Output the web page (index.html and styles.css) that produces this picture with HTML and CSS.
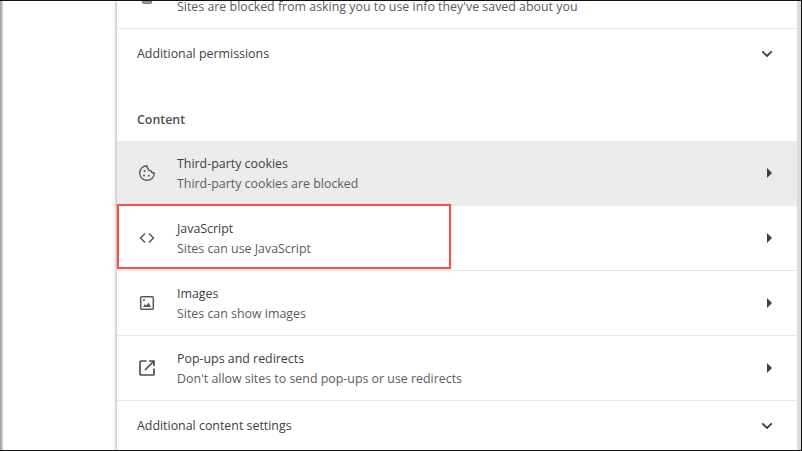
FILE: index.html
```html
<!DOCTYPE html>
<html lang="en">
<head>
    <meta charset="UTF-8">
    <meta name="viewport" content="width=device-width, initial-scale=1.0">
    <title>Site settings</title>
    <link rel="stylesheet" href="styles.css">
</head>
<body>
    <div class="frame">
        <div class="edge-left"></div>
        <div class="gutter"></div>
        <div class="card">
            <div class="row clipped">
                <svg class="icon stub" viewBox="0 0 20 3"><path d="M5.500 0h9v1.500a1 1 0 0 1-1 1h-7a1 1 0 0 1-1-1z" fill="#9a9ca0" stroke="#5f6368" stroke-width="0.800"/></svg>
                <div class="sub">Sites are blocked from asking you to use info they've saved about you</div>
            </div>
            <div class="row short">
                <div class="title grow">Additional permissions</div>
                <svg class="chevron" viewBox="0 0 12 8"><path d="M1.200 1.400 6 6l4.800-4.600" fill="none" stroke="#3c4043" stroke-width="1.800"/></svg>
            </div>
            <div class="heading">Content</div>
            <div class="row hovered">
                <svg class="icon" viewBox="0 0 20 20"><path d="M10 2.700a7.300 7.300 0 1 0 7.300 7.300c-1.900.2-3-.8-3.200-2.300-1.700.3-3-.8-3-2.500C9.800 4.900 9.600 3.800 10 2.700z" fill="none" stroke="#5a5a5a" stroke-width="1.400" stroke-linejoin="round"/><circle cx="7.600" cy="8" r="1.100" fill="#5a5a5a"/><circle cx="7" cy="12.400" r="1" fill="#5a5a5a"/><circle cx="11.800" cy="12.800" r="1" fill="#5a5a5a"/></svg>
                <div class="text grow">
                    <div class="title">Third-party cookies</div>
                    <div class="sub">Third-party cookies are blocked</div>
                </div>
                <div class="arrow"></div>
            </div>
            <div class="row marked">
                <svg class="icon" viewBox="0 0 20 20"><path d="M8 5.500 3.500 10 8 14.500M12 5.500l4.500 4.500-4.500 4.500" fill="none" stroke="#5a5a5a" stroke-width="1.500"/></svg>
                <div class="text grow">
                    <div class="title">JavaScript</div>
                    <div class="sub">Sites can use JavaScript</div>
                </div>
                <div class="arrow"></div>
            </div>
            <div class="row">
                <svg class="icon" viewBox="0 0 20 20"><rect x="3.700" y="3.700" width="12.600" height="12.600" rx="1" fill="none" stroke="#5a5a5a" stroke-width="1.500"/><circle cx="7" cy="7" r="1" fill="#5a5a5a"/><path d="M6 14l2-3 1.500 1.500L11.500 9.500 14 14z" fill="#5a5a5a"/></svg>
                <div class="text grow">
                    <div class="title">Images</div>
                    <div class="sub">Sites can show images</div>
                </div>
                <div class="arrow"></div>
            </div>
            <div class="row">
                <svg class="icon" viewBox="0 0 20 20"><path d="M9.500 3H4a1 1 0 0 0-1 1v12a1 1 0 0 0 1 1h12a1 1 0 0 0 1-1v-5.500" fill="none" stroke="#4f4f4f" stroke-width="1.700"/><path d="M12 3h5v5M17 3 8 12" fill="none" stroke="#4f4f4f" stroke-width="1.700"/></svg>
                <div class="text grow">
                    <div class="title">Pop-ups and redirects</div>
                    <div class="sub">Don't allow sites to send pop-ups or use redirects</div>
                </div>
                <div class="arrow"></div>
            </div>
            <div class="row short">
                <div class="title grow">Additional content settings</div>
                <svg class="chevron" viewBox="0 0 12 8"><path d="M1.200 1.400 6 6l4.800-4.600" fill="none" stroke="#3c4043" stroke-width="1.800"/></svg>
            </div>
        </div>
        <div class="edge-right"></div>
    </div>
</body>
</html>
```

FILE: styles.css
```css
html, body {
    margin: 0;
    height: 100%;
}

body {
    background-color: #ffffff;
    font-family: 'Open Sans', 'Noto Sans', sans-serif;
    overflow: hidden;
}

.frame {
    display: flex;
    box-sizing: border-box;
    height: 451px;
    border-top: 1px solid #111111;
    border-bottom: 1px solid #111111;
    border-right: 1px solid #111111;
    overflow: hidden;
}

.edge-left {
    width: 3px;
    background: linear-gradient(to right, #999999, #d8d8d8);
}

.gutter {
    width: 114px;
}

.edge-right {
    width: 4px;
    background-color: #dcdcdc;
}

.card {
    width: 680px;
    background-color: #ffffff;
    box-shadow: -1px 0 3px rgba(60, 64, 67, 0.4);
}

.row {
    display: flex;
    align-items: center;
    box-sizing: border-box;
    height: 65px;
    padding: 0 20px;
    border-bottom: 1px solid #e8e8e8;
    position: relative;
}

.row.clipped {
    height: 28px;
    align-items: flex-start;
}

.row.clipped .sub {
    line-height: 11px;
}

.row.short {
    height: 50px;
    padding-bottom: 1px;
    border-bottom: none;
}

.row.hovered {
    background-color: #ececec;
    border-bottom-color: #ececec;
}

.icon {
    width: 20px;
    height: 20px;
    margin-right: 20px;
    flex-shrink: 0;
}

.icon.stub {
    height: 3px;
}

.grow {
    flex: 1;
}

.text {
    display: flex;
    flex-direction: column;
    gap: 3px;
}

.title {
    font-size: 12.4px;
    line-height: 17px;
    color: #404040;
}

.sub {
    font-size: 12.4px;
    line-height: 17px;
    color: #5c5c5c;
}

.heading {
    font-size: 12.4px;
    font-weight: 600;
    line-height: 17px;
    color: #505050;
    padding: 32px 20px 13px;
}

.chevron {
    width: 12px;
    height: 8px;
    margin-right: 4px;
}

.arrow {
    width: 0;
    height: 0;
    margin-right: 5px;
    border-top: 5px solid transparent;
    border-bottom: 5px solid transparent;
    border-left: 5px solid #3c4043;
}

.marked::after {
    content: '';
    position: absolute;
    left: 0;
    top: -2px;
    width: 334px;
    height: 65px;
    box-sizing: border-box;
    border: 2px solid #f5524c;
    box-shadow: 0 0 1px rgba(245, 82, 76, 0.6);
}
```
